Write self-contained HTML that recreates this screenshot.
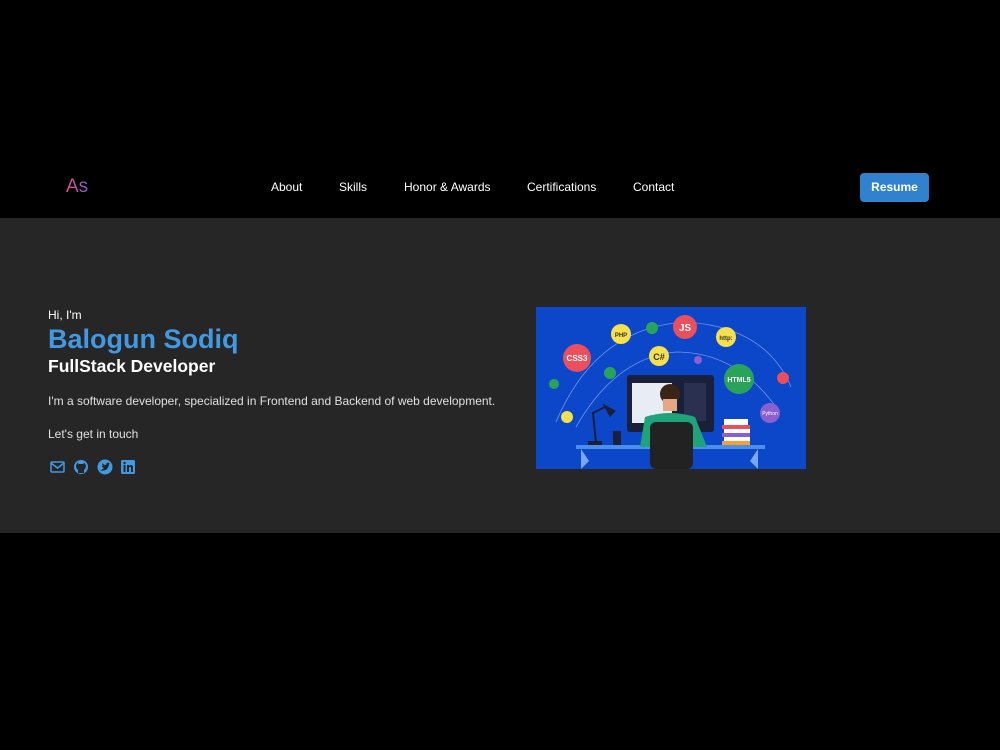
<!DOCTYPE html>
<html><head><meta charset="utf-8"><style>
*{margin:0;padding:0;box-sizing:border-box}
body{width:1000px;height:750px;background:#000;font-family:"Liberation Sans",sans-serif;position:relative;overflow:hidden;color:#fff}
.nav a{position:absolute;top:180px;font-size:12px;color:#fff;text-decoration:none}
.btn{position:absolute;left:860px;top:173px;width:69px;height:29px;background:#3182ce;border-radius:4px;font-size:12px;font-weight:bold;color:#fff;text-align:center;line-height:29px}
.hero{position:absolute;left:0;top:218px;width:1000px;height:315px;background:#262626}
.t{position:absolute;left:48px;white-space:nowrap}
</style></head><body>
<div style="position:absolute;left:66px;top:176px;font-size:19px;background:linear-gradient(90deg,#e0507a,#7a60c8);-webkit-background-clip:text;color:transparent">As</div>
<div class="nav">
<a style="left:271px">About</a><a style="left:339px">Skills</a><a style="left:404px">Honor &amp; Awards</a><a style="left:527px">Certifications</a><a style="left:633px">Contact</a>
</div>
<div class="btn">Resume</div>
<div class="hero"></div>
<div class="t" style="top:308px;font-size:12px">Hi, I'm</div>
<div class="t" style="top:324px;font-size:27px;font-weight:bold;color:#4299e1">Balogun Sodiq</div>
<div class="t" style="top:356px;font-size:17.5px;font-weight:bold">FullStack Developer</div>
<div class="t" style="top:394px;font-size:12px;color:#e0e0e0">I'm a software developer, specialized in Frontend and Backend of web development.</div>
<div class="t" style="top:427px;font-size:12px;color:#e0e0e0">Let's get in touch</div>
<svg style="position:absolute;left:49px;top:459px" width="92" height="16" viewBox="0 0 92 16">
<g fill="none" stroke="#4299e1" stroke-width="1.5"><rect x="2" y="3" width="13" height="10" rx="1"/><path d="M2 4l6.5 5 6.5-5"/></g>
<circle cx="32" cy="8" r="7" fill="#4299e1"/><path d="M29 14v-3c-1-1-2-2-2-4 0-1 1-2 1-2 0-1 0-1 0-1 1 0 2 1 2 1h4s1-1 2-1c0 0 0 0 0 1 0 0 1 1 1 2 0 2-1 3-2 4v3z" fill="#262626"/>
<circle cx="56" cy="8" r="7.5" fill="#4299e1"/><path d="M51 11c2 1 5 1 7-1 1-1 2-3 2-5l1-1-1 0c-1-1-3 0-3 2-2 0-3-1-4-2 0 1 0 2 1 3h-1c0 1 1 2 2 2-1 1-2 2-4 2z" fill="#262626"/>
<rect x="72" y="1" width="14" height="14" rx="1.5" fill="#4299e1"/><rect x="74.5" y="6" width="2" height="7" fill="#262626"/><circle cx="75.5" cy="4" r="1.2" fill="#262626"/><path d="M78 6h2v1c1-1.5 4-1.5 4 1.5V13h-2V9c0-1.5-2-1.5-2 0v4h-2z" fill="#262626"/>
</svg>
<svg style="position:absolute;left:536px;top:307px" width="270" height="162" viewBox="0 0 270 162">
<rect width="270" height="162" fill="#0d47c9"/>
<g fill="none" stroke="#6f95e8" stroke-width="0.8"><path d="M20 115 Q 60 20 150 15 Q 230 20 255 80"/><path d="M40 120 Q 80 50 140 45 Q 200 45 240 100"/></g>
<circle cx="41" cy="51" r="14" fill="#ea4f5b"/><text x="41" y="54" font-size="8" font-weight="bold" fill="#fff" text-anchor="middle">CSS3</text>
<circle cx="85" cy="27" r="10" fill="#f6e04b"/><text x="85" y="30" font-size="6" font-weight="bold" fill="#333" text-anchor="middle">PHP</text>
<circle cx="116" cy="21" r="6" fill="#2aa35a"/>
<circle cx="149" cy="20" r="12" fill="#ea4f5b"/><text x="149" y="24" font-size="10" font-weight="bold" fill="#fff" text-anchor="middle">JS</text>
<circle cx="190" cy="30" r="10" fill="#f6e04b"/><text x="190" y="33" font-size="6" font-weight="bold" fill="#333" text-anchor="middle">http:</text>
<circle cx="123" cy="49" r="10" fill="#f6e04b"/><text x="123" y="53" font-size="9" font-weight="bold" fill="#333" text-anchor="middle">C#</text>
<circle cx="203" cy="72" r="15" fill="#2aa35a"/><text x="203" y="75" font-size="7" font-weight="bold" fill="#fff" text-anchor="middle">HTML5</text>
<circle cx="234" cy="106" r="10" fill="#8a5fd0"/><text x="234" y="108" font-size="5" fill="#fff" text-anchor="middle">Python</text>
<circle cx="247" cy="71" r="6" fill="#ea4f5b"/><circle cx="18" cy="77" r="5" fill="#2aa35a"/><circle cx="74" cy="66" r="6" fill="#2aa35a"/><circle cx="31" cy="110" r="6" fill="#f6e04b"/><circle cx="162" cy="53" r="4" fill="#8a5fd0"/>
<rect x="91" y="68" width="87" height="57" rx="3" fill="#1a1f3a"/><rect x="96" y="76" width="40" height="40" fill="#e8ecf5"/><rect x="148" y="76" width="22" height="38" fill="#2a3050"/>
<rect x="40" y="138" width="189" height="4" fill="#4a8fe8"/>
<path d="M45 142l8 12-8 8zM222 142l-8 12 8 8z" fill="#7aa8f0"/>
<path d="M104 140l5-30q25-8 50 0l12 30z" fill="#1fa37a"/>
<circle cx="134" cy="87" r="10" fill="#3a2418"/><rect x="127" y="92" width="14" height="12" fill="#e6a882"/>
<rect x="114" y="115" width="43" height="47" rx="6" fill="#222"/>
<g><rect x="186" y="118" width="28" height="4" fill="#ea4f5b"/><rect x="188" y="122" width="26" height="4" fill="#fff"/><rect x="186" y="126" width="28" height="4" fill="#8a5fd0"/><rect x="188" y="130" width="26" height="4" fill="#fff"/><rect x="186" y="134" width="28" height="4" fill="#f6a030"/><rect x="188" y="112" width="24" height="6" fill="#fff"/></g>
<path d="M60 136l-3-30 12-6" stroke="#1a1f3a" stroke-width="2" fill="none"/><path d="M66 96l14 8-6 6z" fill="#1a1f3a"/><rect x="52" y="134" width="14" height="4" fill="#1a1f3a"/>
<rect x="77" y="124" width="8" height="14" fill="#1a1f3a"/>
</svg>
</body></html>
